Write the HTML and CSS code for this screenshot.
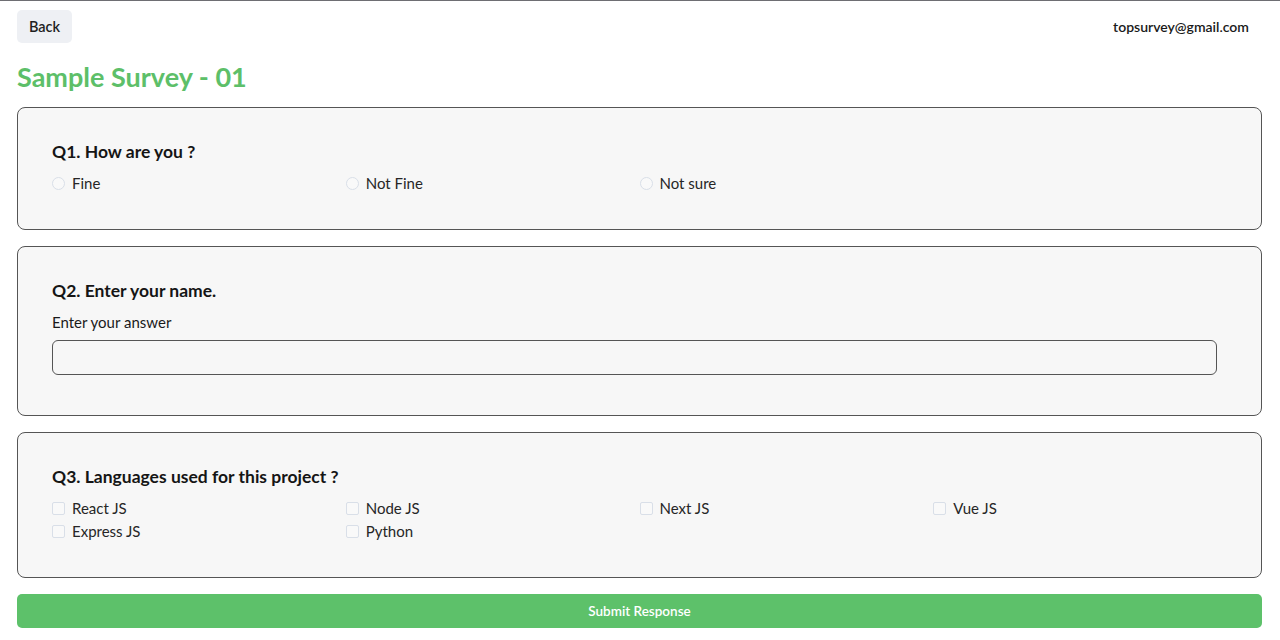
FILE: index.html
```html
<!DOCTYPE html>
<html lang="en">
<head>
<meta charset="utf-8">
<title>Sample Survey - 01</title>
<link rel="stylesheet" href="styles.css">
</head>
<body>
<div class="page">
  <header class="header">
    <button class="back-btn" type="button">Back</button>
    <span class="email">topsurvey@gmail.com</span>
  </header>
  <h1 class="title">Sample Survey - 01</h1>

  <section class="card">
    <h2 class="question">Q1. How are you ?</h2>
    <div class="options">
      <label class="option"><span class="radio"></span>Fine</label>
      <label class="option"><span class="radio"></span>Not Fine</label>
      <label class="option"><span class="radio"></span>Not sure</label>
    </div>
  </section>

  <section class="card card-text">
    <h2 class="question">Q2. Enter your name.</h2>
    <div class="field-label">Enter your answer</div>
    <input class="text-input" type="text">
  </section>

  <section class="card">
    <h2 class="question">Q3. Languages used for this project ?</h2>
    <div class="options">
      <label class="option"><span class="checkbox"></span>React JS</label>
      <label class="option"><span class="checkbox"></span>Node JS</label>
      <label class="option"><span class="checkbox"></span>Next JS</label>
      <label class="option"><span class="checkbox"></span>Vue JS</label>
      <label class="option"><span class="checkbox"></span>Express JS</label>
      <label class="option"><span class="checkbox"></span>Python</label>
    </div>
  </section>

  <button class="submit-btn" type="button">Submit Response</button>
</div>
</body>
</html>
```

FILE: styles.css
```css
* { box-sizing: border-box; }
html, body {
  margin: 0;
  padding: 0;
  background: #ffffff;
}
body {
  font-family: Lato, "Noto Sans", "Liberation Sans", sans-serif;
  color: #1a1a1a;
  border-top: 1px solid #6e6e73;
}
.page {
  padding: 0 18px 0 17px;
}
.header {
  display: flex;
  justify-content: space-between;
  align-items: center;
  padding-top: 9px;
}
.back-btn {
  font-family: inherit;
  font-size: 14.5px;
  font-weight: 600;
  color: #1f1f1f;
  background: #eef0f4;
  border: none;
  border-radius: 5px;
  width: 55px;
  height: 33px;
  padding: 0;
}
.email {
  font-size: 14px;
  font-weight: 600;
  color: #1a1a1a;
  padding-right: 13px;
}
.title {
  margin: 18px 0 14px;
  font-size: 27px;
  line-height: 32px;
  font-weight: 700;
  color: #5dbf69;
}
.card {
  background: #f7f7f7;
  border: 1px solid #555555;
  border-radius: 8px;
  padding: 32px 34px 35px 34px;
  margin-bottom: 16px;
}
.question {
  margin: 0;
  font-size: 17.5px;
  line-height: 24px;
  font-weight: 700;
  color: #151515;
}
.options {
  display: grid;
  grid-template-columns: repeat(4, 1fr);
  row-gap: 1px;
  margin-top: 8px;
}
.option {
  display: flex;
  align-items: center;
  gap: 7px;
  font-size: 15px;
  line-height: 22px;
  color: #262626;
}
.radio {
  width: 13px;
  height: 13px;
  border: 1px solid #d9dfe8;
  border-radius: 50%;
  background: #f9f9f9;
  flex: none;
}
.checkbox {
  width: 13px;
  height: 13px;
  border: 1px solid #d9dfe8;
  border-radius: 2px;
  background: #f9f9f9;
  flex: none;
}
.field-label {
  margin-top: 8px;
  font-size: 15px;
  line-height: 22px;
  color: #1a1a1a;
}
.text-input {
  display: block;
  margin: 7px 10px 5px 0;
  width: calc(100% - 10px);
  height: 35px;
  border: 1px solid #555555;
  border-radius: 6px;
  background: #f7f7f7;
  font-family: inherit;
  font-size: 15px;
}
.submit-btn {
  display: block;
  width: 100%;
  height: 34px;
  margin-top: 0;
  border: none;
  border-radius: 5px;
  background: #5dc16a;
  color: #ffffff;
  font-family: inherit;
  font-size: 13.5px;
  font-weight: 600;
}
```
